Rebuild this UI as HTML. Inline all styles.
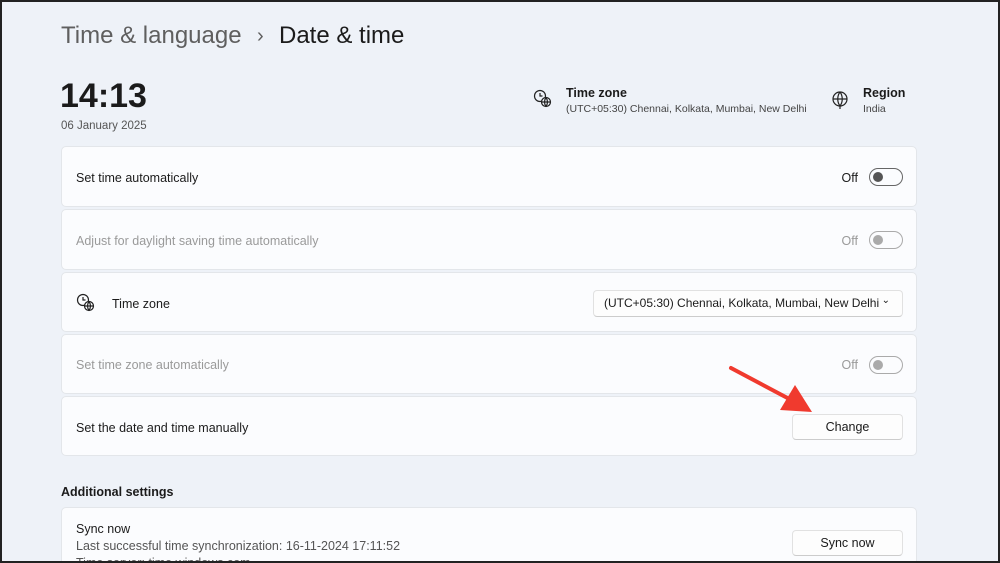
<html><head><style>
html,body{margin:0;width:1000px;height:563px;overflow:hidden}
body{background:#eef2f8;font-family:"Liberation Sans",sans-serif;position:relative;color:#1b1b1b;}
.frame{position:absolute;left:0;top:0;width:1000px;height:563px;border:2px solid #222;box-sizing:border-box;z-index:5;pointer-events:none}
.a{position:absolute;white-space:nowrap}
.card{position:absolute;left:61px;width:856px;background:#fbfcfe;border:1px solid #e3e6ea;border-radius:5px;box-sizing:border-box}
.lbl{position:absolute;left:14px;font-size:12.5px;white-space:nowrap}
.tog{position:absolute;right:13px;width:34px;height:18px;border:1px solid #666;border-radius:9px;box-sizing:border-box}
.tog:after{content:"";position:absolute;left:3px;top:3px;width:10px;height:10px;border-radius:50%;background:#555}
.dis .tog{border-color:#aaa}.dis .tog:after{background:#aaa}
.off{position:absolute;right:58px;font-size:12.5px}
.dis .lbl,.dis .off{color:#9a9a9a}
.btn{position:absolute;right:13px;width:111px;height:26px;background:#fdfdfd;border:1px solid #e1e1e1;border-bottom-color:#ccc;border-radius:4px;box-sizing:border-box;font-size:12.5px;text-align:center;line-height:24px}
</style></head><body>
<div class="frame"></div>
<div class="a" style="left:61px;top:22px;font-size:24px;color:#5f5f5f">Time &amp; language</div>
<div class="a" style="left:257px;top:25px;font-size:20px;color:#5f5f5f">›</div>
<div class="a" style="left:279px;top:22px;font-size:24px">Date &amp; time</div>
<div class="a" style="left:60px;top:77px;font-size:34px;font-weight:bold">14:13</div>
<div class="a" style="left:61px;top:120px;font-size:11.5px;color:#555">06 January 2025</div>
<svg class="a" style="left:533px;top:89px" width="20" height="20" viewBox="0 0 20 20" fill="none" stroke="#222" stroke-width="1.2"><circle cx="7" cy="7" r="5.5"/><path d="M7 4v3h2.5"/><circle cx="13" cy="13" r="4.5" fill="#eef2f8"/><path d="M8.5 13h9M13 8.5c-2 3-2 6 0 9M13 8.5c2 3 2 6 0 9"/></svg>
<div class="a" style="left:566px;top:86px;font-size:12.5px;font-weight:bold">Time zone</div>
<div class="a" style="left:566px;top:103px;font-size:10.5px;color:#444">(UTC+05:30) Chennai, Kolkata, Mumbai, New Delhi</div>
<svg class="a" style="left:831px;top:90px" width="18" height="20" viewBox="0 0 18 20" fill="none" stroke="#222" stroke-width="1.2"><circle cx="9" cy="9" r="7"/><path d="M2 9h14M9 2c-3 4-3 10 0 14M9 2c3 4 3 10 0 14M9 16v3"/></svg>
<div class="a" style="left:863px;top:86px;font-size:12.5px;font-weight:bold">Region</div>
<div class="a" style="left:863px;top:103px;font-size:10.5px;color:#444">India</div>

<div class="card" style="top:146px;height:61px"><div class="lbl" style="top:24px">Set time automatically</div><div class="off" style="top:24px">Off</div><div class="tog" style="top:21px"></div></div>
<div class="card dis" style="top:209px;height:61px"><div class="lbl" style="top:24px">Adjust for daylight saving time automatically</div><div class="off" style="top:24px">Off</div><div class="tog" style="top:21px"></div></div>
<div class="card" style="top:272px;height:60px">
<svg class="a" style="left:14px;top:20px" width="20" height="20" viewBox="0 0 20 20" fill="none" stroke="#222" stroke-width="1.2"><circle cx="7" cy="7" r="5.5"/><path d="M7 4v3h2.5"/><circle cx="13" cy="13" r="4.5" fill="#fbfcfe"/><path d="M8.5 13h9M13 8.5c-2 3-2 6 0 9M13 8.5c2 3 2 6 0 9"/></svg>
<div class="lbl" style="left:50px;top:24px">Time zone</div>
<div class="a" style="right:13px;top:17px;width:310px;height:27px;background:#fdfdfd;border:1px solid #e1e1e1;border-bottom-color:#ccc;border-radius:4px;box-sizing:border-box;font-size:12px;line-height:25px;padding-left:10px">(UTC+05:30) Chennai, Kolkata, Mumbai, New Delhi<span style="position:absolute;right:12px;top:-3px;font-size:10px">⌄</span></div></div>
<div class="card dis" style="top:334px;height:60px"><div class="lbl" style="top:23px">Set time zone automatically</div><div class="off" style="top:23px">Off</div><div class="tog" style="top:21px"></div></div>
<div class="card" style="top:396px;height:60px"><div class="lbl" style="top:24px">Set the date and time manually</div><div class="btn" style="top:17px">Change</div></div>
<div class="a" style="left:61px;top:485px;font-size:12.5px;font-weight:bold">Additional settings</div>
<div class="card" style="top:507px;height:70px"><div class="lbl" style="top:14px">Sync now</div><div class="lbl" style="top:31px;color:#555">Last successful time synchronization: 16-11-2024 17:11:52</div><div class="lbl" style="top:48px;color:#555">Time server: time.windows.com</div><div class="btn" style="top:22px">Sync now</div></div>
<svg class="a" style="left:0;top:0" width="1000" height="563"><line x1="731" y1="368" x2="795" y2="402" stroke="#f03a2e" stroke-width="4" stroke-linecap="round"/><polygon points="812,412 780,410 795,385" fill="#f03a2e"/></svg>
</body></html>
